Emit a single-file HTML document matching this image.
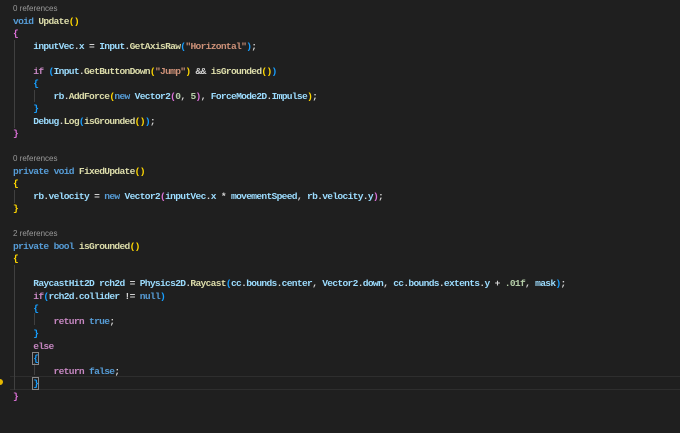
<!DOCTYPE html>
<html><head><meta charset="utf-8"><style>
html,body{margin:0;padding:0;background:#1f1f1f;width:680px;height:433px;overflow:hidden}
.wrap{position:absolute;left:13px;top:3px}
.l{height:12.5px;line-height:12.5px;white-space:pre;font-family:"Liberation Mono",monospace;font-size:9.6px;letter-spacing:-0.69px;font-weight:bold;color:#d4d4d4}
.r{font-family:"Liberation Sans",sans-serif;font-size:8px;letter-spacing:0;font-weight:normal;color:#9a9a9a}
.k{color:#569cd6}.c{color:#c586c0}.f{color:#dcdcaa}.v{color:#9cdcfe}.s{color:#ce9178}.n{color:#b5cea8}
.b1{color:#ffd700}.b2{color:#da70d6}.b3{color:#179fff}
.g{position:absolute;width:1px;background:#404040}
.cur{position:absolute;left:10px;top:376px;width:670px;height:12px;border-top:1px solid #2e2e2e;border-bottom:1px solid #2e2e2e}
.box{outline:1px solid #888}
</style></head><body>
<div class="cur"></div>
<div class="g" style="left:14px;top:40px;height:88px"></div>
<div class="g" style="left:34px;top:90px;height:12px"></div>
<div class="g" style="left:14px;top:190px;height:13px"></div>
<div class="g" style="left:14px;top:265px;height:125px"></div>
<div class="g" style="left:34px;top:313px;height:12px"></div>
<div class="g" style="left:34px;top:363px;height:12px"></div>
<div style="position:absolute;left:-3px;top:379px;width:6px;height:6px;border-radius:50%;background:#e6b800"></div>
<div class="wrap">
<div class="l r">0 references</div>
<div class="l"><span class="k">void</span> <span class="f">Update</span><span class="b1">()</span></div>
<div class="l"><span class="b2">{</span></div>
<div class="l">    <span class="v">inputVec</span>.<span class="v">x</span> = <span class="v">Input</span>.<span class="f">GetAxisRaw</span><span class="b3">(</span><span class="s">"Horizontal"</span><span class="b3">)</span>;</div>
<div class="l"> </div>
<div class="l">    <span class="c">if</span> <span class="b3">(</span><span class="v">Input</span>.<span class="f">GetButtonDown</span><span class="b1">(</span><span class="s">"Jump"</span><span class="b1">)</span> &amp;&amp; <span class="f">isGrounded</span><span class="b1">()</span><span class="b3">)</span></div>
<div class="l">    <span class="b3">{</span></div>
<div class="l">        <span class="v">rb</span>.<span class="f">AddForce</span><span class="b1">(</span><span class="k">new</span> <span class="v">Vector2</span><span class="b2">(</span><span class="n">0</span>, <span class="n">5</span><span class="b2">)</span>, <span class="v">ForceMode2D</span>.<span class="v">Impulse</span><span class="b1">)</span>;</div>
<div class="l">    <span class="b3">}</span></div>
<div class="l">    <span class="v">Debug</span>.<span class="f">Log</span><span class="b3">(</span><span class="f">isGrounded</span><span class="b1">()</span><span class="b3">)</span>;</div>
<div class="l"><span class="b2">}</span></div>
<div class="l"> </div>
<div class="l r">0 references</div>
<div class="l"><span class="k">private</span> <span class="k">void</span> <span class="f">FixedUpdate</span><span class="b1">()</span></div>
<div class="l"><span class="b1">{</span></div>
<div class="l">    <span class="v">rb</span>.<span class="v">velocity</span> = <span class="k">new</span> <span class="v">Vector2</span><span class="b2">(</span><span class="v">inputVec</span>.<span class="v">x</span> * <span class="v">movementSpeed</span>, <span class="v">rb</span>.<span class="v">velocity</span>.<span class="v">y</span><span class="b2">)</span>;</div>
<div class="l"><span class="b1">}</span></div>
<div class="l"> </div>
<div class="l r">2 references</div>
<div class="l"><span class="k">private</span> <span class="k">bool</span> <span class="f">isGrounded</span><span class="b1">()</span></div>
<div class="l"><span class="b1">{</span></div>
<div class="l"> </div>
<div class="l">    <span class="v">RaycastHit2D</span> <span class="v">rch2d</span> = <span class="v">Physics2D</span>.<span class="f">Raycast</span><span class="b3">(</span><span class="v">cc</span>.<span class="v">bounds</span>.<span class="v">center</span>, <span class="v">Vector2</span>.<span class="v">down</span>, <span class="v">cc</span>.<span class="v">bounds</span>.<span class="v">extents</span>.<span class="v">y</span> + <span class="n">.01f</span>, <span class="v">mask</span><span class="b3">)</span>;</div>
<div class="l">    <span class="c">if</span><span class="b3">(</span><span class="v">rch2d</span>.<span class="v">collider</span> != <span class="k">null</span><span class="b3">)</span></div>
<div class="l">    <span class="b3">{</span></div>
<div class="l">        <span class="c">return</span> <span class="k">true</span>;</div>
<div class="l">    <span class="b3">}</span></div>
<div class="l">    <span class="c">else</span></div>
<div class="l">    <span class="b3 box">{</span></div>
<div class="l">        <span class="c">return</span> <span class="k">false</span>;</div>
<div class="l">    <span class="b3 box">}</span></div>
<div class="l"><span class="b2">}</span></div>
</div>
</body></html>
